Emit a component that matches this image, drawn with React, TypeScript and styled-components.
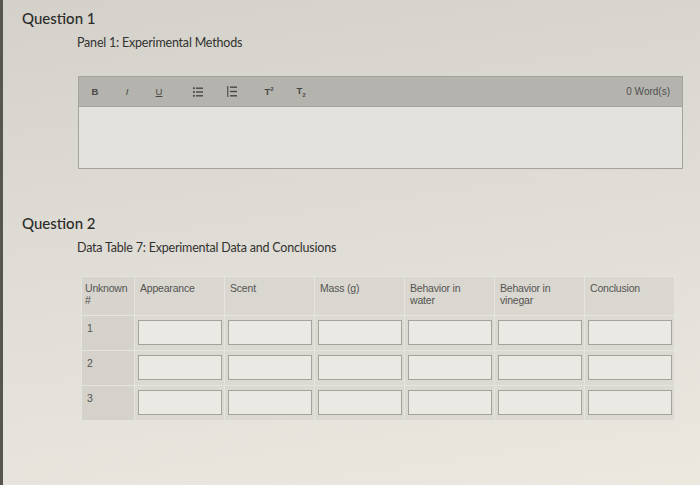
import React from 'react';
import styled, {createGlobalStyle} from "styled-components";

const GlobalStyle = createGlobalStyle`
    html, body {
        margin: 0;
        padding: 0;
    }

    body {
        width: 700px;
        height: 485px;
        overflow: hidden;
        font-family: Lato, "Open Sans", sans-serif;
    }
`

const columns = [
    {id: 1, title: "Unknown #"},
    {id: 2, title: "Appearance"},
    {id: 3, title: "Scent"},
    {id: 4, title: "Mass (g)"},
    {id: 5, title: "Behavior in water"},
    {id: 6, title: "Behavior in vinegar"},
    {id: 7, title: "Conclusion"},
]

const rows = [1, 2, 3]

const BulletIcon = () => (
    <svg width="10" height="10" viewBox="0 0 10 10">
        {[1.2, 5, 8.8].map(y => (
            <g key={y}>
                <rect x="0" y={y - 0.9} width="1.8" height="1.8" fill="#484846"/>
                <rect x="3" y={y - 0.7} width="7" height="1.4" fill="#484846"/>
            </g>
        ))}
    </svg>
)

const NumberIcon = () => (
    <svg width="10" height="11" viewBox="0 0 10 11">
        <rect x="0.2" y="0" width="1.1" height="11" fill="#484846"/>
        {[1.2, 5.5, 9.8].map(y => (
            <rect key={y} x="3" y={y - 0.7} width="7" height="1.4" fill="#484846"/>
        ))}
    </svg>
)

export default function App() {
    return (
        <Page>
            <GlobalStyle/>

            <Question>Question 1</Question>
            <SubTitle>Panel 1: Experimental Methods</SubTitle>

            <Editor>
                <Toolbar>
                    <ToolButton $w={32}><Bold>B</Bold></ToolButton>
                    <ToolButton $w={32}><Italic>I</Italic></ToolButton>
                    <ToolButton $w={32}><Under>U</Under></ToolButton>
                    <ToolButton $w={34} $gap={6}><BulletIcon/></ToolButton>
                    <ToolButton $w={34}><NumberIcon/></ToolButton>
                    <ToolButton $w={32} $gap={4}><Bold>T<Sup>2</Sup></Bold></ToolButton>
                    <ToolButton $w={32}><Bold>T<Sub>2</Sub></Bold></ToolButton>
                    <WordCount>0 Word(s)</WordCount>
                </Toolbar>
                <EditorBody/>
            </Editor>

            <Question $top={45}>Question 2</Question>
            <SubTitle>Data Table 7: Experimental Data and Conclusions</SubTitle>

            <Table>
                {columns.map(col => (
                    <HeadCell key={col.id} $first={col.id === 1}>{col.title}</HeadCell>
                ))}

                {rows.map(row => (
                    <React.Fragment key={row}>
                        <NumCell>{row}</NumCell>
                        {columns.slice(1).map(col => (
                            <InputCell key={col.id}>
                                <Field/>
                            </InputCell>
                        ))}
                    </React.Fragment>
                ))}
            </Table>
        </Page>
    );
};


const Page = styled.div`
    box-sizing: border-box;
    width: 700px;
    height: 485px;
    padding-top: 9px;
    border-left: 3px solid #57554f;
    background: linear-gradient(172deg, #d3d1ca 0%, #dddbd4 40%, #ebe8e0 100%);
    color: #2f2f2d;
`

const Question = styled.div<{ $top?: number }>`
    margin: ${props => props.$top ?? 0}px 0 0 19px;
    font-size: 15px;
    line-height: 18px;
    font-weight: 500;
    color: #2c2c2a;
`

const SubTitle = styled.div`
    margin: 8px 0 0 74px;
    font-size: 12.5px;
    line-height: 15px;
    letter-spacing: -0.2px;
    color: #333230;
`

const Editor = styled.div`
    margin: 26px 0 0 75px;
    width: 603px;
    border: 1px solid #a3a29d;
`

const Toolbar = styled.div`
    display: flex;
    align-items: center;
    height: 29px;
    background: #b4b3ad;
    border-bottom: 1px solid #a3a29d;
    font-family: "Liberation Sans", Arial, sans-serif;
    color: #484846;
`

const ToolButton = styled.div<{ $w: number, $gap?: number }>`
    display: flex;
    align-items: center;
    justify-content: center;
    width: ${props => props.$w}px;
    margin-left: ${props => props.$gap ?? 0}px;
    height: 100%;
    font-size: 9.5px;
`

const Bold = styled.span`
    font-weight: 700;
`

const Italic = styled.span`
    font-style: italic;
`

const Under = styled.span`
    text-decoration: underline;
`

const Sup = styled.sup`
    font-size: 5.5px;
`

const Sub = styled.sub`
    font-size: 5.5px;
`

const WordCount = styled.div`
    margin-left: auto;
    padding-right: 12px;
    font-size: 10px;
    color: #505050;
`

const EditorBody = styled.div`
    height: 61px;
    background: #e4e2dc;
`

const Table = styled.div`
    display: grid;
    grid-template-columns: 52px repeat(6, 89px);
    grid-template-rows: 38px repeat(3, 34px);
    gap: 1px;
    width: fit-content;
    margin: 21px 0 0 78px;
    padding: 1px;
    background: #e6e4de;
    font-family: "Liberation Sans", Arial, sans-serif;
    font-size: 10.5px;
    line-height: 12px;
    color: #545451;
`

const HeadCell = styled.div<{ $first?: boolean }>`
    padding: 5px 12px 0 ${props => props.$first ? 3 : 5}px;
    background: ${props => props.$first ? "#d6d4cd" : "#d9d7d0"};
    letter-spacing: -0.2px;
`

const NumCell = styled.div`
    padding: 6px 0 0 5px;
    background: #d4d2cb;
`

const InputCell = styled.div`
    display: flex;
    padding: 4px 2px 5px 3px;
    background: #dbd9d2;
`

const Field = styled.div`
    flex: 1;
    border: 1.5px solid #a3a29c;
    background: #ebe9e3;
`
